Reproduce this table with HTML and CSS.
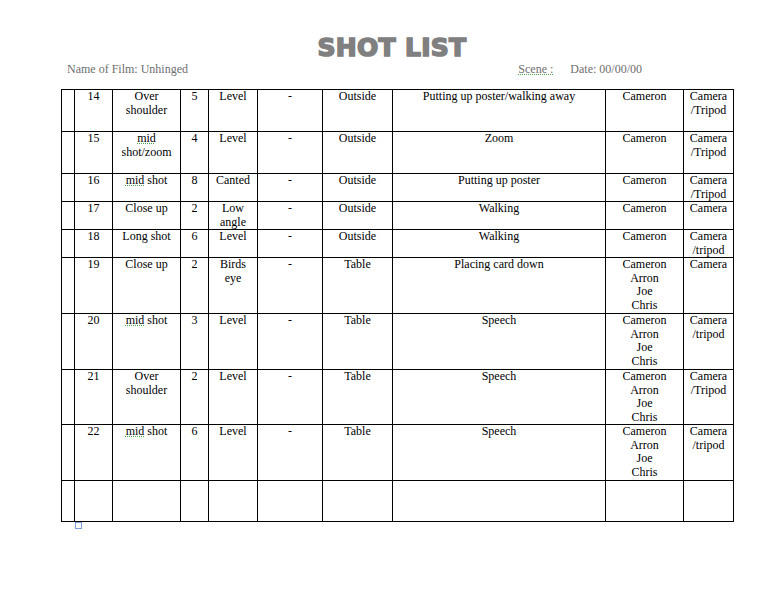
FILE: index.html
```html
<!DOCTYPE html>
<html>
<head>
<meta charset="utf-8">
<link rel="stylesheet" href="styles.css">
</head>
<body>
<div class="page">
  <h1 class="title">SHOT LIST</h1>
  <div class="meta">
    <span class="film">Name of Film: Unhinged</span>
    <span class="right"><span class="spell">Scene :</span><span class="date">Date: 00/00/00</span></span>
  </div>
  <table class="shots">
    <colgroup>
      <col class="c0"><col class="c1"><col class="c2"><col class="c3"><col class="c4"><col class="c5"><col class="c6"><col class="c7"><col class="c8"><col class="c9">
    </colgroup>
    <tr class="h3"><td></td><td>14</td><td>Over<br>shoulder</td><td>5</td><td>Level</td><td>-</td><td>Outside</td><td>Putting up poster/walking away</td><td>Cameron</td><td>Camera<br>/Tripod</td></tr>
    <tr class="h3"><td></td><td>15</td><td><span class="spell">mid</span><br>shot/zoom</td><td>4</td><td>Level</td><td>-</td><td>Outside</td><td>Zoom</td><td>Cameron</td><td>Camera<br>/Tripod</td></tr>
    <tr class="h2"><td></td><td>16</td><td><span class="spell">mid</span> shot</td><td>8</td><td>Canted</td><td>-</td><td>Outside</td><td>Putting up poster</td><td>Cameron</td><td>Camera<br>/Tripod</td></tr>
    <tr class="h2"><td></td><td>17</td><td>Close up</td><td>2</td><td>Low<br>angle</td><td>-</td><td>Outside</td><td>Walking</td><td>Cameron</td><td>Camera</td></tr>
    <tr class="h2"><td></td><td>18</td><td>Long shot</td><td>6</td><td>Level</td><td>-</td><td>Outside</td><td>Walking</td><td>Cameron</td><td>Camera<br>/tripod</td></tr>
    <tr class="h4"><td></td><td>19</td><td>Close up</td><td>2</td><td>Birds<br>eye</td><td>-</td><td>Table</td><td>Placing card down</td><td>Cameron<br>Arron<br>Joe<br>Chris</td><td>Camera</td></tr>
    <tr class="h4"><td></td><td>20</td><td><span class="spell">mid</span> shot</td><td>3</td><td>Level</td><td>-</td><td>Table</td><td>Speech</td><td>Cameron<br>Arron<br>Joe<br>Chris</td><td>Camera<br>/tripod</td></tr>
    <tr class="h4b"><td></td><td>21</td><td>Over<br>shoulder</td><td>2</td><td>Level</td><td>-</td><td>Table</td><td>Speech</td><td>Cameron<br>Arron<br>Joe<br>Chris</td><td>Camera<br>/Tripod</td></tr>
    <tr class="h4"><td></td><td>22</td><td><span class="spell">mid</span> shot</td><td>6</td><td>Level</td><td>-</td><td>Table</td><td>Speech</td><td>Cameron<br>Arron<br>Joe<br>Chris</td><td>Camera<br>/tripod</td></tr>
    <tr class="h3b"><td></td><td></td><td></td><td></td><td></td><td></td><td></td><td></td><td></td><td></td></tr>
  </table>
  <div class="mark"></div>
</div>
</body>
</html>
```
FILE: styles.css
```css
html, body {
  margin: 0;
  padding: 0;
  background: #ffffff;
}
.page {
  width: 784px;
  height: 602px;
  position: relative;
  font-family: "Liberation Serif", "Times New Roman", serif;
}
.title {
  margin: 0;
  padding-top: 34px;
  height: 26px;
  text-align: center;
  font-family: "DejaVu Sans", sans-serif;
  font-weight: bold;
  font-size: 25px;
  line-height: 27px;
  color: #808080;
  -webkit-text-stroke: 1.6px #808080;
  letter-spacing: 0.3px;
}
.meta {
  display: flex;
  justify-content: space-between;
  padding: 3px 0 0 67px;
  width: 575px;
  height: 16px;
  font-size: 12px;
  line-height: 13px;
  color: #6e6e6e;
}
.right {
  display: flex;
  gap: 17px;
}
.spell {
  text-decoration: underline dotted #4aa84a;
  text-decoration-thickness: 1px;
  text-underline-offset: 1px;
}
.shots {
  margin: 10px 0 0 61px;
  border-collapse: collapse;
  table-layout: fixed;
  width: 673px;
  font-size: 12px;
  line-height: 13.5px;
  color: #000;
}
.shots td {
  border: 1px solid #000;
  padding: 0 1px;
  vertical-align: top;
  text-align: center;
  overflow: hidden;
}
.c0 { width: 13px; }
.c1 { width: 38px; }
.c2 { width: 68px; }
.c3 { width: 28px; }
.c4 { width: 49px; }
.c5 { width: 65px; }
.c6 { width: 70px; }
.c7 { width: 213px; }
.c8 { width: 78px; }
.c9 { width: 50px; }
.h2 td { height: 27px; }
.h3 td { height: 41px; }
.h3b td { height: 40px; }
.h4 td { height: 55px; }
.h4b td { height: 54px; }
.mark {
  position: absolute;
  left: 75px;
  top: 522px;
  width: 5px;
  height: 5px;
  border: 1px solid #7d9be0;
}
```
